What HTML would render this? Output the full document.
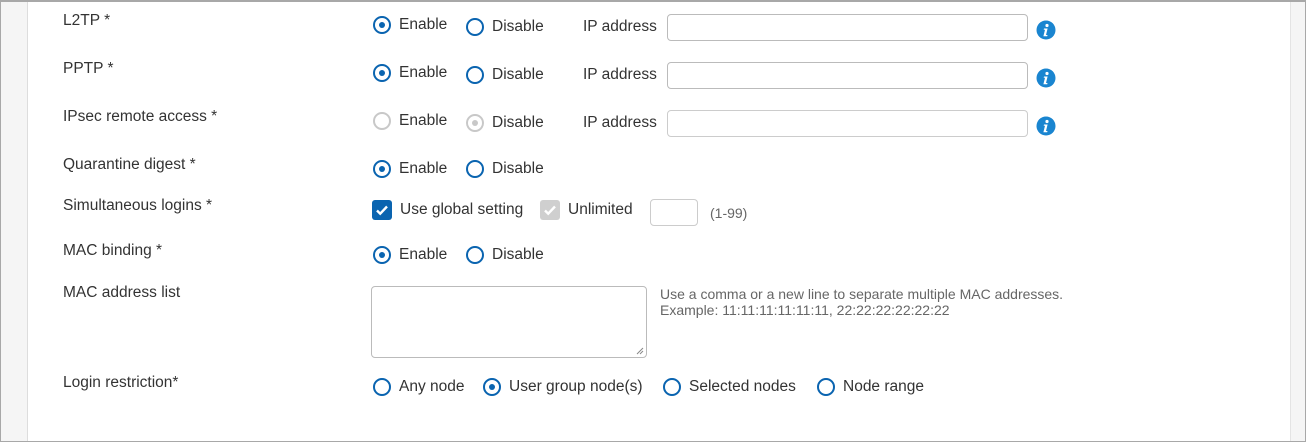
<!DOCTYPE html>
<html><head><meta charset="utf-8"><style>
*{margin:0;padding:0;box-sizing:border-box}
html,body{width:1306px;height:442px;overflow:hidden;background:#fff}
body{font-family:"Liberation Sans",sans-serif;font-size:15.5px;color:#333;position:relative}
.frame{position:absolute;left:0;top:0;width:1306px;height:442px;border:1px solid #a8a8a8;border-top:2px solid #a8a8a8}
.lstrip{position:absolute;left:1px;top:2px;width:27px;height:439px;background:#f5f5f5;border-right:1px solid #ddd}
.rstrip{position:absolute;left:1290px;top:2px;width:15px;height:439px;background:#f5f5f5;border-left:1px solid #e4e4e4}
.t{position:absolute;white-space:nowrap;line-height:18px}
.r{position:absolute;width:18px;height:18px;border:2px solid #0a64b0;border-radius:50%;background:#fff}
.r.on::after{content:"";position:absolute;left:4px;top:4px;width:6px;height:6px;border-radius:50%;background:#0a64b0}
.r.dis{border-color:#c8c8c8}
.r.dis.on::after{background:#c8c8c8}
.in{position:absolute;border:1px solid #bbb;border-radius:4px;background:#fff}
.cb{position:absolute;width:20px;height:20px;border-radius:3px;background:#0a64b0}
.cb svg{position:absolute;left:2px;top:2px}
.cb.dis{background:#cfcfcf}
.info{position:absolute}
.hint{color:#666;font-size:14px}
</style></head><body>
<div class="frame"></div><div class="lstrip"></div><div class="rstrip"></div>

<div class="t" style="left:63px;top:12px">L2TP *</div>
<div class="t" style="left:63px;top:60px">PPTP *</div>
<div class="t" style="left:63px;top:108px">IPsec remote access *</div>
<div class="t" style="left:63px;top:156px">Quarantine digest *</div>
<div class="t" style="left:63px;top:197px">Simultaneous logins *</div>
<div class="t" style="left:63px;top:242px">MAC binding *</div>
<div class="t" style="left:63px;top:284px">MAC address list</div>
<div class="t" style="left:63px;top:374px">Login restriction*</div>

<div class="r on" style="left:373px;top:16px"></div><div class="t" style="left:399px;top:16px">Enable</div>
<div class="r" style="left:466px;top:18px"></div><div class="t" style="left:492px;top:18px">Disable</div>
<div class="t" style="left:583px;top:18px">IP address</div>
<div class="in" style="left:667px;top:14px;width:361px;height:27px"></div>
<svg class="info" style="left:1036px;top:20px" width="20" height="20" viewBox="0 0 20 20"><circle cx="10" cy="10" r="9.5" fill="#1a85d0"/><circle cx="11" cy="5.5" r="1.6" fill="#fff"/><path d="M8 8.5h3.6l-1.6 6.5h1.5l-.3 1.2H7.4l1.6-6.5H7.7z" fill="#fff"/></svg>

<div class="r on" style="left:373px;top:64px"></div><div class="t" style="left:399px;top:64px">Enable</div>
<div class="r" style="left:466px;top:66px"></div><div class="t" style="left:492px;top:66px">Disable</div>
<div class="t" style="left:583px;top:66px">IP address</div>
<div class="in" style="left:667px;top:62px;width:361px;height:27px"></div>
<svg class="info" style="left:1036px;top:68px" width="20" height="20" viewBox="0 0 20 20"><circle cx="10" cy="10" r="9.5" fill="#1a85d0"/><circle cx="11" cy="5.5" r="1.6" fill="#fff"/><path d="M8 8.5h3.6l-1.6 6.5h1.5l-.3 1.2H7.4l1.6-6.5H7.7z" fill="#fff"/></svg>

<div class="r dis" style="left:373px;top:112px"></div><div class="t" style="left:399px;top:112px">Enable</div>
<div class="r dis on" style="left:466px;top:114px"></div><div class="t" style="left:492px;top:114px">Disable</div>
<div class="t" style="left:583px;top:114px">IP address</div>
<div class="in" style="left:667px;top:110px;width:361px;height:27px;border-color:#ccc"></div>
<svg class="info" style="left:1036px;top:116px" width="20" height="20" viewBox="0 0 20 20"><circle cx="10" cy="10" r="9.5" fill="#1a85d0"/><circle cx="11" cy="5.5" r="1.6" fill="#fff"/><path d="M8 8.5h3.6l-1.6 6.5h1.5l-.3 1.2H7.4l1.6-6.5H7.7z" fill="#fff"/></svg>

<div class="r on" style="left:373px;top:160px"></div><div class="t" style="left:399px;top:160px">Enable</div>
<div class="r" style="left:466px;top:160px"></div><div class="t" style="left:492px;top:160px">Disable</div>

<div class="cb" style="left:372px;top:200px"><svg width="16" height="16" viewBox="0 0 16 16"><path d="M3 8.5l3.2 3.2L13 4.5" stroke="#fff" stroke-width="2.4" fill="none"/></svg></div>
<div class="t" style="left:400px;top:201px">Use global setting</div>
<div class="cb dis" style="left:540px;top:200px"><svg width="16" height="16" viewBox="0 0 16 16"><path d="M3 8.5l3.2 3.2L13 4.5" stroke="#fff" stroke-width="2.4" fill="none"/></svg></div>
<div class="t" style="left:568px;top:201px">Unlimited</div>
<div class="in" style="left:650px;top:199px;width:48px;height:27px;border-color:#ccc"></div>
<div class="t hint" style="left:710px;top:204px">(1-99)</div>

<div class="r on" style="left:373px;top:246px"></div><div class="t" style="left:399px;top:246px">Enable</div>
<div class="r" style="left:466px;top:246px"></div><div class="t" style="left:492px;top:246px">Disable</div>

<div class="in" style="left:371px;top:286px;width:276px;height:72px"><svg style="position:absolute;right:2px;bottom:2px" width="9" height="9"><path d="M8 2L2 8M8 5L5 8" stroke="#888" stroke-width="1"/></svg></div>
<div class="t hint" style="left:660px;top:286px;line-height:16px">Use a comma or a new line to separate multiple MAC addresses.<br>Example: 11:11:11:11:11:11, 22:22:22:22:22:22</div>

<div class="r" style="left:373px;top:378px"></div><div class="t" style="left:399px;top:378px">Any node</div>
<div class="r on" style="left:483px;top:378px"></div><div class="t" style="left:509px;top:378px">User group node(s)</div>
<div class="r" style="left:663px;top:378px"></div><div class="t" style="left:689px;top:378px">Selected nodes</div>
<div class="r" style="left:817px;top:378px"></div><div class="t" style="left:843px;top:378px">Node range</div>
</body></html>
